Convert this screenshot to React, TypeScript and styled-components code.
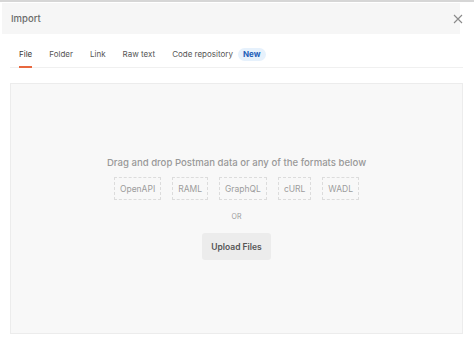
import React from 'react';
import styled, { createGlobalStyle } from 'styled-components';

const GlobalStyle = createGlobalStyle`
  html, body {
    margin: 0;
    padding: 0;
    background: #ffffff;
    font-family: Inter, "Noto Sans", sans-serif;
  }
  * { box-sizing: border-box; }
`;

const Modal = styled.div`
  width: 474px;
  height: 346px;
  border-top: 2px solid #d6d6d6;
  background: #ffffff;
  display: flex;
  flex-direction: column;
`;

const Header = styled.div`
  display: flex;
  align-items: center;
  justify-content: space-between;
  height: 31px;
  margin: 1px 14px 0 2px;
  padding: 0 9px;
  background: #f6f6f6;
`;

const HeaderTitle = styled.span`
  font-size: 9.5px;
  font-weight: 500;
  color: #6b6b6b;
`;

const CloseButton = styled.button`
  border: none;
  background: transparent;
  padding: 0;
  margin-right: -12px;
  display: flex;
  align-items: center;
  justify-content: center;
  color: #8a8a8a;
  cursor: pointer;
`;

const Body = styled.div`
  display: flex;
  flex-direction: column;
  padding: 0 11px 0 10px;
  flex: 1;
`;

const TabList = styled.div`
  display: flex;
  align-items: flex-end;
  gap: 17px;
  margin-top: 11px;
  padding-left: 9px;
  border-bottom: 1px solid #f0f0f0;
`;

const Tab = styled.div<{ $active?: boolean }>`
  display: flex;
  align-items: center;
  gap: 5px;
  padding: 3px 0 5px;
  font-size: 8px;
  line-height: 13px;
  color: ${({ $active }) => ($active ? '#3a3a3a' : '#555555')};
  border-bottom: 2px solid ${({ $active }) => ($active ? '#e8683f' : 'transparent')};
  margin-bottom: -1px;
`;

const Badge = styled.span`
  background: #e6f1fc;
  color: #1e5fb8;
  font-size: 8px;
  font-weight: 700;
  line-height: 11px;
  padding: 1px 5px;
  border-radius: 8px;
`;

const DropZone = styled.div`
  margin-top: 15px;
  height: 251px;
  background: #f8f8f8;
  border: 1px solid #ececec;
  display: flex;
  flex-direction: column;
  align-items: center;
  justify-content: center;
`;

const DropText = styled.div`
  font-size: 9.6px;
  font-weight: 500;
  color: #999999;
`;

const FormatRow = styled.div`
  display: flex;
  gap: 11px;
  margin-top: 9px;
`;

const FormatChip = styled.div`
  height: 23px;
  padding: 0 5px;
  display: flex;
  align-items: center;
  font-size: 8.5px;
  color: #9c9c9c;
  border: 1px dashed #dcdcdc;
`;

const OrText = styled.div`
  margin-top: 12px;
  font-size: 7px;
  color: #9a9a9a;
`;

const UploadButton = styled.button`
  margin-top: 12px;
  height: 27px;
  padding: 0 9px;
  border: none;
  border-radius: 3px;
  background: #ececec;
  color: #555555;
  font-family: inherit;
  font-size: 8.5px;
  font-weight: 600;
  cursor: pointer;
`;

const formats = ['OpenAPI', 'RAML', 'GraphQL', 'cURL', 'WADL'];
const tabs = ['File', 'Folder', 'Link', 'Raw text'];

export default function App() {
  return (
    <>
      <GlobalStyle />
      <Modal>
        <Header>
          <HeaderTitle>Import</HeaderTitle>
          <CloseButton aria-label="Close">
            <svg width="10" height="10" viewBox="0 0 10 10" fill="none">
              <path d="M1 1L9 9M9 1L1 9" stroke="currentColor" strokeWidth="1.1" />
            </svg>
          </CloseButton>
        </Header>
        <Body>
          <TabList>
            {tabs.map((t, i) => (
              <Tab key={t} $active={i === 0}>{t}</Tab>
            ))}
            <Tab>
              Code repository
              <Badge>New</Badge>
            </Tab>
          </TabList>
          <DropZone>
            <DropText>Drag and drop Postman data or any of the formats below</DropText>
            <FormatRow>
              {formats.map((f) => (
                <FormatChip key={f}>{f}</FormatChip>
              ))}
            </FormatRow>
            <OrText>OR</OrText>
            <UploadButton>Upload Files</UploadButton>
          </DropZone>
        </Body>
      </Modal>
    </>
  );
}
